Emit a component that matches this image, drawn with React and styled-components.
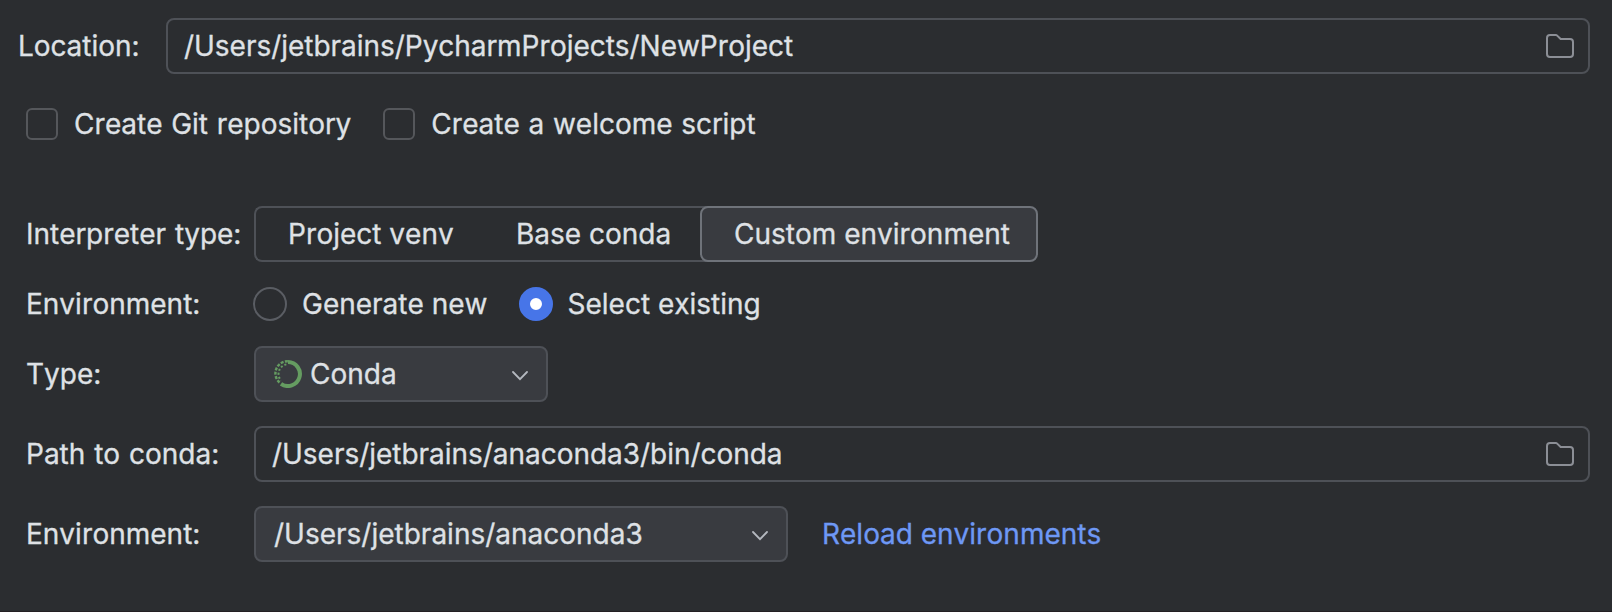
import React, { useState } from 'react';
import styled, { createGlobalStyle } from 'styled-components';

const GlobalStyle = createGlobalStyle`
  * {
    box-sizing: border-box;
  }

  body {
    margin: 0;
    background-color: #2b2d30;
  }
`;

const Panel = styled.main`
  display: flex;
  flex-direction: column;
  width: 1612px;
  height: 612px;
  padding: 18px 22px 0 18px;
  background-color: #2b2d30;
  border-bottom: 1px solid #241f23;
  color: #dfe1e5;
  font-family: Inter, "Liberation Sans", sans-serif;
  font-size: 28px;
  font-kerning: none;
  line-height: 32px;
  white-space: nowrap;
  -webkit-text-stroke: 0.3px;
`;

const LocationRow = styled.div`
  display: grid;
  grid-template-columns: 148px 1fr;
  align-items: center;
`;

const Options = styled.div`
  display: flex;
  gap: 32px;
  padding: 34px 0 66px 8px;
  word-spacing: 0.8px;
`;

const Option = styled.label`
  display: flex;
  align-items: center;
  gap: ${props => props.$gap || 16}px;
`;

const CheckBox = styled.input`
  appearance: none;
  width: 32px;
  height: 32px;
  margin: 0;
  border: 2px solid #55575b;
  border-radius: 6px;
`;

const Form = styled.div`
  display: grid;
  grid-template-columns: 228px 1fr;
  grid-template-rows: 56px 36px 56px 56px 56px;
  row-gap: 24px;
  align-items: center;
  padding-left: 8px;
`;

const Label = styled.span`
  word-spacing: 1px;
`;

const Field = styled.div`
  display: flex;
  align-items: center;
  justify-content: space-between;
  height: 56px;
  padding: 0 14px 0 16px;
  border: 2px solid #4e5157;
  border-radius: 8px;
  letter-spacing: -0.03px;
`;

const Segments = styled.div`
  display: flex;
  justify-self: start;
  height: 56px;
`;

const Segment = styled.button`
  width: ${props => props.$width}px;
  margin-left: ${props => props.$active ? -8 : 0}px;
  padding: 0 0 0 ${props => props.$indent}px;
  border: 2px solid ${props => props.$active ? '#6f737a' : '#4e5157'};
  border-left-width: ${props => props.$joined ? 0 : 2}px;
  border-right-width: ${props => props.$active ? 2 : 0}px;
  border-radius: ${props => props.$active ? '8px' : props.$joined ? '0' : '8px 0 0 8px'};
  background-color: ${props => props.$active ? '#393b40' : 'transparent'};
  color: inherit;
  font: inherit;
  font-kerning: inherit;
  text-align: left;
`;

const Radios = styled.div`
  display: flex;
  gap: 31px;
  margin-left: -1px;
`;

const Radio = styled.input`
  appearance: none;
  width: 34px;
  height: 34px;
  margin: 0;
  border: 2px solid #5a5d63;
  border-radius: 50%;

  &:checked {
    border: 11px solid #4775e8;
    background-color: #ffffff;
  }
`;

const Select = styled.button`
  display: flex;
  align-items: center;
  width: ${props => props.$width}px;
  height: 56px;
  padding: 0 18px;
  border: 2px solid #4e5157;
  border-radius: 8px;
  background-color: #393b40;
  color: inherit;
  font: inherit;
  font-kerning: inherit;
`;

const SelectText = styled.span`
  flex: 1;
  text-align: left;
`;

const EnvironmentRow = styled.div`
  display: flex;
  align-items: center;
  gap: 34px;
`;

const Link = styled.a`
  color: #6e98f5;
  text-decoration: none;
`;

const CondaSvg = styled.svg`
  margin-right: 8px;
`;

const ChevronSvg = styled.svg`
  margin-top: 4px;
`;

const FolderIcon = () => (
  <svg width="28" height="24" viewBox="0 0 28 24" fill="none" stroke="#8c8f96" strokeWidth="2">
    <path d="M1 4a3 3 0 0 1 3-3h5.8a2 2 0 0 1 1.4.6L14.6 5H24a3 3 0 0 1 3 3v12a3 3 0 0 1-3 3H4a3 3 0 0 1-3-3Z" />
  </svg>
);

const ChevronIcon = () => (
  <ChevronSvg width="16" height="10" viewBox="0 0 16 10" fill="none" stroke="#b4b8bf" strokeWidth="1.8">
    <path d="M1 1l7 7.2L15 1" strokeLinecap="round" />
  </ChevronSvg>
);

// Solid arc on the right, scattered segments on the left
const CondaIcon = () => (
  <CondaSvg width="28" height="28" viewBox="0 0 28 28" fill="none" stroke="#659c61">
    <path d="M14 2a12 12 0 1 1-7 21.8" strokeWidth="4" />
    <path d="M5.5 22.5A12.2 12.2 0 0 1 14 1.2" strokeWidth="2.4" strokeDasharray="3 1.4" />
    <path d="M7 20.5A9.8 9.8 0 0 1 14 4.2" strokeWidth="2" strokeDasharray="2 2" strokeDashoffset="1.8" />
  </CondaSvg>
);

const segments = [
  { name: 'Project venv', width: 229, indent: 32 },
  { name: 'Base conda', width: 225, indent: 33 },
  { name: 'Custom environment', width: 338, indent: 32 },
];

const App = () => {
  const [interpreter, setInterpreter] = useState('Custom environment');
  const [environment, setEnvironment] = useState('existing');

  return (
    <>
      <GlobalStyle />
      <Panel>
        <LocationRow>
          <Label>Location:</Label>
          <Field>
            <span>/Users/jetbrains/PycharmProjects/NewProject</span>
            <FolderIcon />
          </Field>
        </LocationRow>
        <Options>
          <Option>
            <CheckBox type="checkbox" />
            <span>Create Git repository</span>
          </Option>
          <Option>
            <CheckBox type="checkbox" />
            <span>Create a welcome script</span>
          </Option>
        </Options>
        <Form>
          <Label>Interpreter type:</Label>
          <Segments>
            {segments.map((segment, i) => (
              <Segment
                key={segment.name}
                $width={segment.width}
                $indent={segment.indent}
                $joined={i === 1}
                $active={segment.name === interpreter}
                onClick={() => setInterpreter(segment.name)}
              >
                {segment.name}
              </Segment>
            ))}
          </Segments>
          <Label>Environment:</Label>
          <Radios>
            <Option $gap={15}>
              <Radio
                type="radio"
                name="environment"
                checked={environment === 'new'}
                onChange={() => setEnvironment('new')}
              />
              <span>Generate new</span>
            </Option>
            <Option $gap={15}>
              <Radio
                type="radio"
                name="environment"
                checked={environment === 'existing'}
                onChange={() => setEnvironment('existing')}
              />
              <span>Select existing</span>
            </Option>
          </Radios>
          <Label>Type:</Label>
          <Select $width={294}>
            <CondaIcon />
            <SelectText>Conda</SelectText>
            <ChevronIcon />
          </Select>
          <Label>Path to conda:</Label>
          <Field>
            <span>/Users/jetbrains/anaconda3/bin/conda</span>
            <FolderIcon />
          </Field>
          <Label>Environment:</Label>
          <EnvironmentRow>
            <Select $width={534}>
              <SelectText>/Users/jetbrains/anaconda3</SelectText>
              <ChevronIcon />
            </Select>
            <Link href="#">Reload environments</Link>
          </EnvironmentRow>
        </Form>
      </Panel>
    </>
  );
};

export default App;
